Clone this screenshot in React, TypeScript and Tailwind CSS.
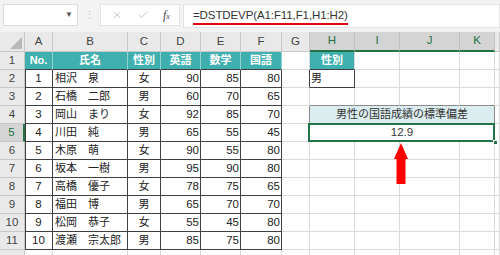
import { X, Check } from 'lucide-react';

const people: [number, string, string, number, number, number][] = [
  [1, '相沢　泉', '女', 90, 85, 80],
  [2, '石橋　二郎', '男', 60, 70, 65],
  [3, '岡山　まり', '女', 92, 85, 70],
  [4, '川田　純', '男', 65, 55, 45],
  [5, '木原　萌', '女', 90, 55, 80],
  [6, '坂本　一樹', '男', 95, 90, 80],
  [7, '高橋　優子', '女', 78, 75, 65],
  [8, '福田　博', '男', 65, 70, 70],
  [9, '松岡　恭子', '女', 55, 45, 80],
  [10, '渡瀬　宗太郎', '男', 85, 75, 80],
];

const letters = ['A', 'B', 'C', 'D', 'E', 'F', 'G', 'H', 'I', 'J', 'K', ''];
const gridCols =
  'grid grid-cols-[25px_28px_75px_33px_40px_40px_41px_28px_45px_45px_60px_35px_1fr]';

const grid = 'border-r border-b border-[#dadada]';
const dark = 'border-r border-b border-[#404040]';
const teal = 'bg-[#3fb0af] text-white font-bold text-center border-r border-b border-r-[#8fd3d2] border-b-[#404040]';

function FormulaBar() {
  return (
    <div className="flex h-[32px] items-start bg-[#f3f3f3] pl-[3px] pt-[4px]">
      <div className="flex h-[22px] w-[75px] items-center justify-end border border-[#dcdcdc] bg-white pr-[4px]">
        <span className="text-[8px] text-[#555]">▼</span>
      </div>
      <div className="flex h-[22px] w-[22px] items-center justify-center text-[11px] text-[#c0c0c0]">⋮</div>
      <div className="flex h-[22px] w-[80px] items-center border border-[#e4e4e4] bg-white pl-[10px]">
        <X size={12} strokeWidth={1.5} className="text-[#b5b5b5]" />
        <Check size={12} strokeWidth={1.5} className="ml-[14px] text-[#b5b5b5]" />
        <span className="ml-[14px] font-['Liberation_Serif',serif] text-[12px] italic text-[#444]">
          f<span className="text-[8px]">x</span>
        </span>
      </div>
      <div className="ml-[3px] flex h-[24px] flex-1 items-start border border-[#e4e4e4] bg-white pl-[9px] pt-[3px]">
        <span className="inline-block border-b-2 border-[#e60012] pb-[1px] text-[11.5px] leading-[14px] tracking-[-0.1px] text-[#333]">
          =DSTDEVP(A1:F11,F1,H1:H2)
        </span>
      </div>
    </div>
  );
}

function ColumnHeader() {
  return (
    <div className={`${gridCols} h-[20px] bg-[#e9e9e9] text-[11.5px] text-[#444]`}>
      <div className="relative border-r border-b border-[#c8c8c8]">
        <svg className="absolute left-[10px] top-[5px]" width="12" height="12" viewBox="0 0 12 12">
          <polygon points="12,0 12,12 0,12" fill="#b8b8b8" />
        </svg>
      </div>
      {letters.map((l, i) => {
        const sel = i >= 7 && i <= 10;
        return (
          <div
            key={i}
            className={
              sel
                ? 'flex items-center justify-center border-r border-b-2 border-r-[#c0c0c0] border-b-[#217346] bg-[#d4d4d4] text-[#217346]'
                : 'flex items-center justify-center border-r border-b border-[#c8c8c8]'
            }
          >
            {l}
          </div>
        );
      })}
    </div>
  );
}

function RowHead({ n }: { n?: number }) {
  return n === 5 ? (
    <div className="flex items-center justify-center border-r-2 border-b border-r-[#217346] border-b-[#c8c8c8] bg-[#d4d4d4] text-[11.5px] text-[#217346]">
      {n}
    </div>
  ) : (
    <div className="flex items-center justify-center border-r border-b border-[#c8c8c8] bg-[#e9e9e9] text-[11.5px] text-[#444]">
      {n}
    </div>
  );
}

function Empty({ cls = grid }: { cls?: string }) {
  return <div className={cls} />;
}

export default function App() {
  return (
    <div className="relative h-[255px] w-[500px] overflow-hidden bg-white font-['Liberation_Sans','Noto_Sans_CJK_JP',sans-serif]">
      <FormulaBar />
      <ColumnHeader />

      {/* row 1 */}
      <div className={`${gridCols} h-[18px] text-[11px] leading-[17px]`}>
        <RowHead n={1} />
        <div className={teal}>No.</div>
        <div className={teal}>氏名</div>
        <div className={teal}>性別</div>
        <div className={teal}>英語</div>
        <div className={teal}>数学</div>
        <div className={teal}>国語</div>
        <Empty />
        <div className="border-r border-b border-r-[#dadada] border-b-[#404040] bg-[#3fb0af] text-center font-bold text-white">性別</div>
        <Empty />
        <Empty />
        <Empty />
        <Empty />
      </div>

      {people.map((p, idx) => {
        const row = idx + 2;
        return (
          <div key={row} className={`${gridCols} h-[18px] text-[11.5px] leading-[17px] text-[#222]`}>
            <RowHead n={row} />
            <div className={`${dark} text-center shadow-[inset_1px_0_0_#404040]`}>{p[0]}</div>
            <div className={`${dark} pl-[2px] text-[11px]`}>{p[1]}</div>
            <div className={`${dark} text-center text-[11px]`}>{p[2]}</div>
            <div className={`${dark} pr-[1px] text-right`}>{p[3]}</div>
            <div className={`${dark} pr-[1px] text-right`}>{p[4]}</div>
            <div className={`${dark} pr-[1px] text-right`}>{p[5]}</div>
            {row === 2 ? (
              <>
                <Empty cls="border-r border-b border-r-[#404040] border-b-[#dadada]" />
                <div className={`${dark} pl-[1px] text-[11px]`}>男</div>
                <Empty />
                <Empty />
                <Empty />
                <Empty />
              </>
            ) : row === 3 ? (
              <>
                <Empty />
                <Empty cls="border-r border-b border-r-[#dadada] border-b-[#8a8a8a]" />
                <Empty cls="border-r border-b border-r-[#dadada] border-b-[#8a8a8a]" />
                <Empty cls="border-r border-b border-r-[#dadada] border-b-[#8a8a8a]" />
                <Empty cls="border-r border-b border-r-[#dadada] border-b-[#8a8a8a]" />
                <Empty />
              </>
            ) : row === 4 ? (
              <>
                <Empty cls="border-r border-b border-r-[#8a8a8a] border-b-[#dadada]" />
                <div className="col-span-4 border-r border-b border-[#8a8a8a] bg-[#dcedef] text-center text-[11px] text-[#333]">
                  男性の国語成績の標準偏差
                </div>
                <Empty />
              </>
            ) : row === 5 ? (
              <>
                <Empty />
                <div className="relative col-span-4 border-r border-b border-[#8a8a8a] text-center text-[#333]">
                  12.9
                  <div className="absolute inset-[-1px] left-[-2px] border-2 border-[#217346]" />
                  <div className="absolute bottom-[-4px] right-[-4px] h-[5px] w-[5px] border border-white bg-[#217346]" />
                </div>
                <Empty />
              </>
            ) : (
              <>
                <Empty />
                <Empty />
                <Empty />
                <Empty />
                <Empty />
                <Empty />
              </>
            )}
          </div>
        );
      })}

      {/* row 12, only its top edge is in view */}
      <div className={`${gridCols} h-[18px]`}>
        <RowHead />
        {letters.map((_, i) => (
          <Empty key={i} />
        ))}
      </div>

      {/* red arrow annotation */}
      <svg className="absolute left-[392px] top-[143px]" width="18" height="42" viewBox="0 0 18 42">
        <polygon points="9,0 16,16 13.5,16 13.5,41 4.5,41 4.5,16 2,16" fill="#ff0000" />
      </svg>
    </div>
  );
}
